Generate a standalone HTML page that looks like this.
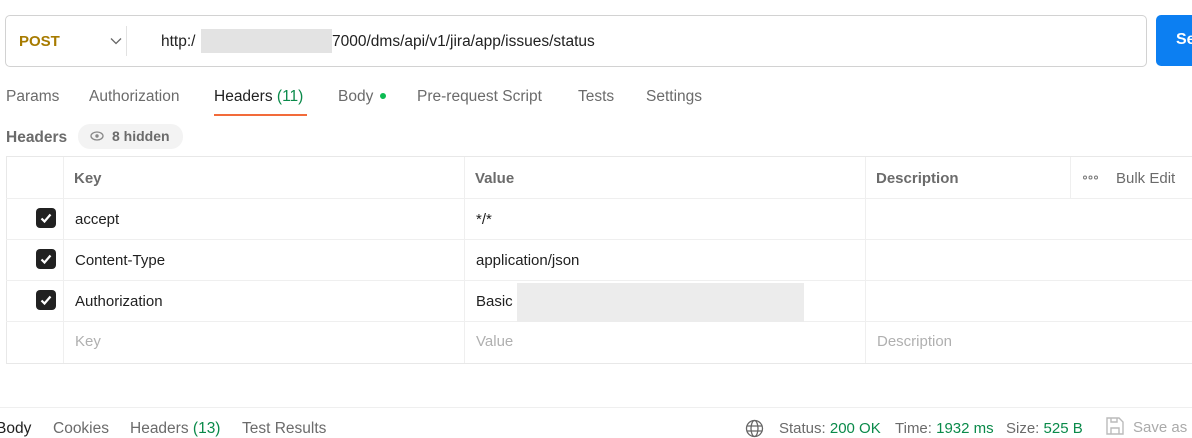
<!DOCTYPE html>
<html><head><style>
*{box-sizing:border-box;margin:0;padding:0}
body{width:1192px;height:437px;background:#fff;font-family:"Liberation Sans",sans-serif;font-size:15px;color:#212121;position:relative;overflow:hidden}
.a{position:absolute;white-space:nowrap}
.g{color:#6b6b6b}
.grn{color:#0a8a4a}
.hl{position:absolute;height:1px;background:#efefef}
.vl{position:absolute;width:1px;background:#efefef}
.cb{position:absolute;left:36px;width:20px;height:20px;background:#212121;border-radius:4px}
.cb svg{position:absolute;left:3px;top:3px}
</style></head><body>
<div class="a" style="left:5px;top:15px;width:1142px;height:52px;border:1px solid #d2d2d2;border-radius:5px"></div>
<div class="a" style="left:19px;top:33px;color:#a77b00;font-weight:bold;font-size:15px">POST</div>
<svg class="a" style="left:110px;top:37px" width="12" height="8"><path d="M1 1.5L6 6.5L11 1.5" stroke="#666" stroke-width="1.3" fill="none"/></svg>
<div class="vl" style="left:126px;top:26px;height:30px;background:#e2e2e2"></div>
<div class="a" style="left:161px;top:33px;font-size:15.5px">http:/</div>
<div class="a" style="left:201px;top:29px;width:131px;height:24px;background:#e3e3e3"></div>
<div class="a" style="left:332px;top:33px;font-size:15.5px">7000/dms/api/v1/jira/app/issues/status</div>
<div class="a" style="left:1156px;top:15px;width:50px;height:51px;background:#0c7ff2;border-radius:5px;color:#fff;font-weight:bold;font-size:16px;padding:16px 0 0 20px">Se</div>

<div class="a g" style="left:6px;top:88px;font-size:15.5px">Params</div>
<div class="a g" style="left:89px;top:88px;font-size:15.5px">Authorization</div>
<div class="a" style="left:214px;top:88px;font-size:15.5px">Headers <span class="grn">(11)</span></div>
<div class="a" style="left:214px;top:114px;width:93px;height:2px;background:#f26b3a"></div>
<div class="a g" style="left:338px;top:88px;font-size:15.5px">Body <span style="display:inline-block;width:6px;height:6px;border-radius:3px;background:#0cbb52;vertical-align:2px;margin-left:2px"></span></div>
<div class="a g" style="left:417px;top:88px;font-size:15.5px">Pre-request Script</div>
<div class="a g" style="left:578px;top:88px;font-size:15.5px">Tests</div>
<div class="a g" style="left:646px;top:88px;font-size:15.5px">Settings</div>

<div class="a g" style="left:6px;top:129px;font-weight:bold;font-size:15.5px">Headers</div>
<div class="a" style="left:78px;top:124px;width:105px;height:25px;background:#f3f3f3;border-radius:12px"></div>
<svg class="a" style="left:90px;top:131px" width="14" height="10"><ellipse cx="7" cy="5" rx="6" ry="4" stroke="#888" stroke-width="1.3" fill="none"/><circle cx="7" cy="5" r="1.7" fill="#888"/></svg>
<div class="a g" style="left:112px;top:128px;font-weight:bold;font-size:14px">8 hidden</div>

<div class="a" style="left:6px;top:156px;width:1200px;height:208px;border:1px solid #e8e8e8"></div>
<div class="hl" style="left:6px;top:198px;width:1190px"></div>
<div class="hl" style="left:6px;top:239px;width:1190px"></div>
<div class="hl" style="left:6px;top:280px;width:1190px"></div>
<div class="hl" style="left:6px;top:321px;width:1190px"></div>
<div class="vl" style="left:63px;top:157px;height:206px"></div>
<div class="vl" style="left:464px;top:157px;height:206px"></div>
<div class="vl" style="left:865px;top:157px;height:206px"></div>
<div class="vl" style="left:1070px;top:157px;height:41px"></div>

<div class="a g" style="left:74px;top:170px;font-weight:bold">Key</div>
<div class="a g" style="left:475px;top:170px;font-weight:bold">Value</div>
<div class="a g" style="left:876px;top:170px;font-weight:bold">Description</div>
<svg class="a" style="left:1083px;top:175px" width="16" height="5"><g fill="none" stroke="#777" stroke-width="1"><circle cx="2" cy="2.5" r="1.5"/><circle cx="7.5" cy="2.5" r="1.5"/><circle cx="13" cy="2.5" r="1.5"/></g></svg>
<div class="a g" style="left:1116px;top:170px">Bulk Edit</div>

<div class="cb" style="top:208px"><svg width="14" height="14"><path d="M2.5 7.5L5.5 10.5L11.5 3.5" stroke="#fff" stroke-width="2.2" fill="none"/></svg></div>
<div class="cb" style="top:249px"><svg width="14" height="14"><path d="M2.5 7.5L5.5 10.5L11.5 3.5" stroke="#fff" stroke-width="2.2" fill="none"/></svg></div>
<div class="cb" style="top:290px"><svg width="14" height="14"><path d="M2.5 7.5L5.5 10.5L11.5 3.5" stroke="#fff" stroke-width="2.2" fill="none"/></svg></div>
<div class="a" style="left:75px;top:211px">accept</div>
<div class="a" style="left:476px;top:211px">*/*</div>
<div class="a" style="left:75px;top:252px">Content-Type</div>
<div class="a" style="left:476px;top:252px">application/json</div>
<div class="a" style="left:75px;top:293px">Authorization</div>
<div class="a" style="left:476px;top:293px">Basic</div>
<div class="a" style="left:517px;top:283px;width:287px;height:39px;background:#ececec"></div>
<div class="a" style="left:75px;top:333px;color:#b0b0b0">Key</div>
<div class="a" style="left:476px;top:333px;color:#b0b0b0">Value</div>
<div class="a" style="left:877px;top:333px;color:#b0b0b0">Description</div>

<div class="hl" style="left:0;top:407px;width:1192px"></div>
<div class="a" style="left:-4px;top:420px;font-size:15.5px">Body</div>
<div class="a g" style="left:53px;top:420px;font-size:15.5px">Cookies</div>
<div class="a g" style="left:130px;top:420px;font-size:15.5px">Headers <span class="grn">(13)</span></div>
<div class="a g" style="left:242px;top:420px;font-size:15.5px">Test Results</div>
<svg class="a" style="left:745px;top:419px" width="19" height="19"><g stroke="#666" stroke-width="1.3" fill="none"><circle cx="9.5" cy="9.5" r="8"/><ellipse cx="9.5" cy="9.5" rx="3.5" ry="8"/><path d="M1.5 7h16M1.5 12h16"/></g></svg>
<div class="a g" style="left:779px;top:420px">Status: <span class="grn">200 OK</span></div>
<div class="a g" style="left:895px;top:420px">Time: <span class="grn">1932 ms</span></div>
<div class="a g" style="left:1006px;top:420px">Size: <span class="grn">525 B</span></div>
<svg class="a" style="left:1105px;top:416px" width="20" height="20"><g stroke="#bbb" stroke-width="1.4" fill="none"><path d="M2 2h12l4 4v12H2z"/><path d="M6 2v4h6V2M6 18v-6h8v6"/></g></svg>
<div class="a" style="left:1133px;top:419px;color:#aaa">Save as</div>
</body></html>
